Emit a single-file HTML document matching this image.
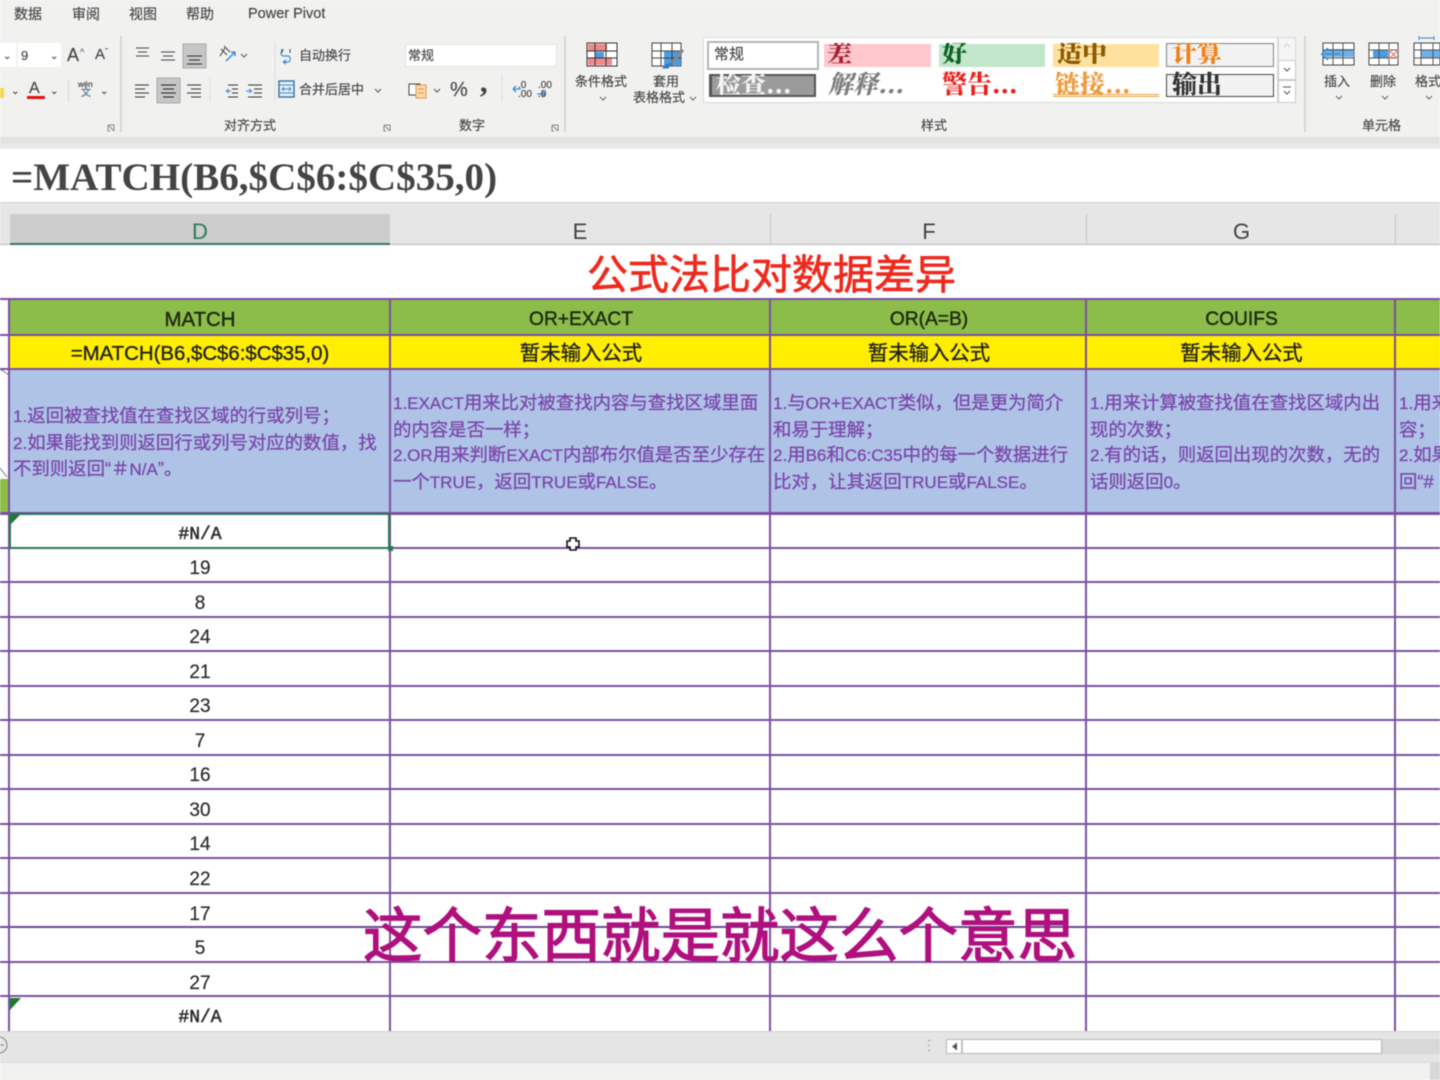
<!DOCTYPE html>
<html lang="zh">
<head>
<meta charset="utf-8">
<title>公式法比对数据差异</title>
<style>
html,body{margin:0;padding:0;}
body{width:1440px;height:1080px;position:relative;overflow:hidden;background:#fff;font-family:"Liberation Sans","Noto Sans CJK SC",sans-serif;color:#333;filter:blur(.5px);}
.a{position:absolute;white-space:nowrap;}
.t{position:absolute;white-space:nowrap;font-size:13px;line-height:16px;color:#4a4a4a;-webkit-text-stroke:.2px #4a4a4a;}
.c{position:absolute;text-align:center;white-space:nowrap;}
.h{position:absolute;background:#7a4fa3;}
.num{font-size:19px;line-height:24px;color:#2c2c2c;-webkit-text-stroke:.2px #2c2c2c;}
.mono{font-family:'Liberation Mono','Noto Sans CJK SC',monospace;font-size:18px;-webkit-text-stroke:.5px #2c2c2c;}
.head{font-size:19.2px;line-height:24px;color:#1f2a10;-webkit-text-stroke:.45px #1f2a10;}
.f{font-size:20.4px;line-height:24px;color:#222;-webkit-text-stroke:.35px #222;}
.desc{position:absolute;font-size:18.4px;line-height:25.7px;color:#7a48ac;white-space:nowrap;-webkit-text-stroke:.3px #7a48ac;}
.desc span{font-size:17px;}
.st{position:absolute;font-family:"Noto Serif CJK SC","Liberation Serif",serif;font-weight:900;font-size:25px;line-height:24px;white-space:nowrap;}
.r1{clip-path:inset(3px 0 0 0);}
svg{position:absolute;overflow:visible;}
</style>
</head>
<body>
<!-- ribbon -->
<div class="a" style="left:0;top:0;width:1440px;height:137px;background:#f1f1f0;"></div>
<div class="a" style="left:0;top:137px;width:1440px;height:12px;background:linear-gradient(#dfdfdd,#ececeb);"></div>
<div class="t" style="left:14px;top:6px;font-size:14px;">数据</div>
<div class="t" style="left:72px;top:6px;font-size:14px;">审阅</div>
<div class="t" style="left:129px;top:6px;font-size:14px;">视图</div>
<div class="t" style="left:186px;top:6px;font-size:14px;">帮助</div>
<div class="t" style="left:248px;top:6px;font-size:14.5px;">Power Pivot</div>

<!-- font group -->
<div class="a" style="left:0;top:43px;width:16px;height:24px;background:#fff;"></div>
<div class="a" style="left:18px;top:43px;width:43px;height:24px;background:#fff;"></div>
<div class="t" style="left:21px;top:48px;">9</div>
<div class="t" style="left:3px;top:49px;font-size:10px;">⌄</div>
<div class="t" style="left:50px;top:49px;font-size:10px;">⌄</div>
<div class="t" style="left:67px;top:44px;font-size:18px;line-height:22px;">A</div>
<div class="t" style="left:80px;top:44px;font-size:9px;color:#4a90d0;">^</div>
<div class="t" style="left:95px;top:47px;font-size:15px;">A</div>
<div class="t" style="left:105px;top:44px;font-size:9px;color:#4a90d0;">ˇ</div>
<div class="a" style="left:0;top:88px;width:4px;height:10px;background:#f4d84a;"></div>
<div class="t" style="left:11px;top:84px;font-size:10px;">⌄</div>
<div class="t" style="left:29px;top:80px;font-size:16px;line-height:18px;">A</div>
<div class="a" style="left:27px;top:96px;width:18px;height:3px;background:#e01010;"></div>
<div class="t" style="left:50px;top:84px;font-size:10px;">⌄</div>
<div class="a" style="left:68px;top:80px;width:1px;height:22px;background:#d8d8d8;"></div>
<div class="t" style="left:78px;top:80px;font-size:8px;line-height:9px;">wén</div>
<div class="t" style="left:81px;top:88px;font-size:10px;line-height:11px;color:#4a90d0;">文</div>
<div class="t" style="left:100px;top:84px;font-size:10px;">⌄</div>
<div class="a" style="left:120px;top:36px;width:2px;height:96px;background:#d6d6d6;"></div>
<svg style="left:0;top:0" width="1440" height="140" fill="none" stroke-width="1">
  <path d="M108 125h6v6M114 131l-5-5M108 125v6h2" stroke="#888"/>
  <path d="M384 125h6v6M390 131l-5-5M384 125v6h2" stroke="#888"/>
  <path d="M552 125h6v6M558 131l-5-5M552 125v6h2" stroke="#888"/>
  <!-- alignment icons -->
  <path d="M136 48h13M138 52h9M136 56h13" stroke="#444"/>
  <path d="M161 52h14M163 56h10M161 60h14" stroke="#444"/>
  <rect x="183" y="44" width="23" height="24" fill="#c6c6c6" stroke="#aaa"/>
  <path d="M187 56h15M189 60h11M187 64h15" stroke="#333"/>
  <path d="M135 85h14M135 89h10M135 93h14M135 97h10" stroke="#333"/>
  <rect x="157" y="78" width="23" height="25" fill="#c6c6c6" stroke="#aaa"/>
  <path d="M161 85h15M163 89h11M161 93h15M163 97h11" stroke="#222"/>
  <path d="M187 85h14M191 89h10M187 93h14M191 97h10" stroke="#333"/>
  <path d="M210 78v24M275 42v62" stroke="#ddd"/>
  <path d="M228 85h10M232 89h6M232 93h6M228 97h10" stroke="#333"/>
  <path d="M226 91h5M226 91l3-2M226 91l3 2" stroke="#3d8bd0"/>
  <path d="M248 85h14M254 89h8M254 93h8M248 97h14" stroke="#333"/>
  <path d="M246 91h6M252 91l-3-2M252 91l-3 2" stroke="#3d8bd0"/>
  <!-- orientation -->
  <path d="M221 49l6 6M224 46l6 6M220 56l5-8" stroke="#444"/>
  <path d="M226 61l9-9M235 52h-4M235 52v4" stroke="#3d8bd0" stroke-width="1.5"/>
  <path d="M241 54l3 3 3-3" stroke="#555"/>
  <!-- wrap -->
  <path d="M284 50c-4 0-4 6 0 6h4c3 0 3 6 0 6h-5M283 62l3-2M283 62l3 2" stroke="#3d8bd0" stroke-width="1.2"/>
  <path d="M290 49v4M282 49v4" stroke="#444"/>
  <!-- merge -->
  <rect x="279" y="81" width="15" height="16" fill="#e6f0fa" stroke="#3a6f9a" stroke-width="1.4"/>
  <path d="M279 85h15M279 93h15M282 89h9M282 89l2-2M282 89l2 2M291 89l-2-2M291 89l-2 2" stroke="#3d8bd0"/>
  <path d="M375 89l3 3 3-3" stroke="#555"/>
  <!-- number -->
  <path d="M549 53l3 3 3-3" stroke="#444"/>
  <rect x="409" y="84" width="11" height="11" fill="#fff" stroke="#444"/>
  <rect x="416" y="85" width="10" height="13" fill="#fbd9a8" stroke="#e2974a"/>
  <path d="M418 89h6M418 93h6" stroke="#e2974a"/>
  <path d="M434 89l3 3 3-3" stroke="#555"/>
  <path d="M502 74v28" stroke="#dedede"/>
  <path d="M513 89h8M513 89l3-3M513 89l3 3" stroke="#3d8bd0" stroke-width="1.3"/>
  <path d="M537 94h8M545 94l-3-3M545 94l-3 3" stroke="#3d8bd0" stroke-width="1.3"/>
  <path d="M565 36v96" stroke="#d6d6d6" stroke-width="2"/>
  <!-- conditional formatting -->
  <rect x="587" y="43" width="30" height="23" fill="#fff" stroke="#333"/>
  <path d="M588 44h19v7h-19zM588 58h24v7h-24z" fill="#f08a8a" stroke="none"/>
  <rect x="595" y="52" width="9" height="6" fill="#4a9be0" stroke="none"/>
  <path d="M595 43v23M606 43v23M587 51h30M587 58h30" stroke="#333"/>
  <!-- table format -->
  <rect x="652" y="43" width="29" height="23" fill="#fff" stroke="#444"/>
  <path d="M664 51h17v15h-17z" fill="#4a9be0" stroke="none"/>
  <path d="M661 43v23M672 43v23M652 51h29M652 58h29" stroke="#444"/>
  <path d="M683 50l-12 14" stroke="#8a8a8a" stroke-width="3"/>
  <path d="M672 63l-4 5h-5l3-3z" fill="#2f7cc0" stroke="#2f7cc0"/>
  <!-- cells icons -->
  <rect x="1323" y="43" width="31" height="22" fill="#fff" stroke="#444"/>
  <rect x="1325" y="49" width="29" height="8" fill="#6db0ea" stroke="none"/>
  <path d="M1333 43v22M1343 43v22M1323 50h31M1323 58h31" stroke="#555"/>
  <path d="M1340 54h-18l6-6M1322 54l6 6" stroke="#3d8bd0" stroke-width="1.5"/>
  <rect x="1369" y="43" width="29" height="22" fill="#fff" stroke="#444"/>
  <rect x="1373" y="50" width="15" height="8" fill="#4a9be0" stroke="none"/>
  <path d="M1379 43v22M1389 43v22M1369 50h29M1369 58h29" stroke="#555"/>
  <path d="M1388 49l11 11M1399 49l-11 11" stroke="#e88a8a" stroke-width="1.5"/>
  <rect x="1414" y="43" width="26" height="22" fill="#fff" stroke="#444"/>
  <rect x="1421" y="50" width="19" height="8" fill="#6db0ea" stroke="none"/>
  <path d="M1421 43v22M1433 43v22M1414 50h26M1414 58h26" stroke="#555"/>
  <path d="M1419 38h15M1419 36v4M1434 36v4" stroke="#3d8bd0"/>
  <path d="M1305 36v96" stroke="#d6d6d6" stroke-width="2"/>
  <path d="M1336 96l3 3 3-3M1382 96l3 3 3-3M1426 96l3 3 3-3M600 97l3 3 3-3M690 97l3 3 3-3" stroke="#666"/>
</svg>
<div class="t" style="left:299px;top:48px;font-size:13px;">自动换行</div>
<div class="t" style="left:299px;top:82px;font-size:13px;">合并后居中</div>
<div class="t" style="left:224px;top:118px;font-size:13px;">对齐方式</div>

<div class="a" style="left:405px;top:44px;width:152px;height:23px;background:#fff;border:1px solid #e2e2e2;box-sizing:border-box;"></div>
<div class="t" style="left:408px;top:48px;">常规</div>
<div class="t" style="left:450px;top:79px;font-size:20px;line-height:22px;">%</div>
<div class="t" style="left:480px;top:70px;font-size:30px;line-height:26px;font-weight:bold;font-family:'Liberation Serif',serif;color:#444;">,</div>
<div class="t" style="left:518px;top:81px;font-size:10px;line-height:9px;">.0<br>.00</div>
<div class="t" style="left:538px;top:81px;font-size:10px;line-height:9px;">.00<br>.0</div>
<div class="t" style="left:459px;top:118px;">数字</div>

<div class="t" style="left:575px;top:74px;">条件格式</div>
<div class="t" style="left:653px;top:74px;">套用</div>
<div class="t" style="left:633px;top:90px;">表格格式</div>

<!-- style gallery -->
<div class="a" style="left:703px;top:37px;width:575px;height:66px;background:#fff;border:1px solid #d8d8d8;box-sizing:border-box;"></div>
<div class="a" style="left:707px;top:41px;width:112px;height:29px;background:#fff;border:2px solid #b5b5b5;box-sizing:border-box;"></div>
<div class="t" style="left:714px;top:47px;font-size:15px;">常规</div>
<div class="a" style="left:709px;top:74px;width:107px;height:23px;background:#9b9b9b;border:1px solid #555;border-width:2px 2px 2px 3px;box-sizing:border-box;"></div>
<div class="st" style="left:716px;top:71px;color:#f4f4f4;clip-path:inset(3px 0 0 0);">检查...</div>
<div class="a" style="left:824px;top:44px;width:107px;height:23px;background:#ffc7ce;"></div>
<div class="st r1" style="left:827px;top:40px;color:#a5202c;">差</div>
<div class="a" style="left:939px;top:44px;width:106px;height:23px;background:#c2e6c9;"></div>
<div class="st r1" style="left:942px;top:40px;color:#0d6320;">好</div>
<div class="a" style="left:1053px;top:44px;width:106px;height:23px;background:#ffe19e;"></div>
<div class="st r1" style="left:1057px;top:40px;color:#8d5a00;">适中</div>
<div class="a" style="left:1166px;top:43px;width:108px;height:24px;background:#f2f2f2;border:1px solid #7f7f7f;box-sizing:border-box;"></div>
<div class="st r1" style="left:1172px;top:40px;color:#f07f17;">计算</div>
<div class="st" style="left:828px;top:71px;color:#7f7f7f;font-style:italic;">解释...</div>
<div class="st" style="left:942px;top:71px;color:#e6201b;">警告...</div>
<div class="st" style="left:1055px;top:71px;color:#ef9a3c;">链接...</div>
<div class="a" style="left:1053px;top:94px;width:106px;height:3px;border-top:1px solid #ef9a3c;border-bottom:1px solid #ef9a3c;box-sizing:border-box;"></div>
<div class="a" style="left:1166px;top:74px;width:108px;height:23px;background:#f2f2f2;border:1px solid #4a4a4a;box-sizing:border-box;"></div>
<div class="st" style="left:1172px;top:71px;color:#333;">输出</div>
<div class="a" style="left:1278px;top:37px;width:18px;height:66px;background:#f5f5f5;border:1px solid #d8d8d8;box-sizing:border-box;"></div>
<div class="a" style="left:1278px;top:60px;width:18px;height:20px;background:#fff;border:1px solid #c8c8c8;box-sizing:border-box;"></div>
<div class="a" style="left:1278px;top:80px;width:18px;height:23px;background:#fff;border:1px solid #c8c8c8;box-sizing:border-box;"></div>
<svg style="left:1278px;top:37px" width="18" height="66" fill="none" stroke="#555"><path d="M6 10l3-3 3 3" stroke="#ccc"/><path d="M6 31l3 3 3-3"/><path d="M5 50h8M6 54l3 3 3-3"/></svg>
<div class="t" style="left:921px;top:118px;">样式</div>
<div class="t" style="left:1324px;top:74px;">插入</div>
<div class="t" style="left:1370px;top:74px;">删除</div>
<div class="t" style="left:1415px;top:74px;">格式</div>
<div class="t" style="left:1362px;top:118px;">单元格</div>

<!-- formula bar -->
<div class="a" style="left:0;top:149px;width:1440px;height:53px;background:#fff;border-bottom:1px solid #d2d2d2;"></div>
<div class="a" style="left:11px;top:155px;font-family:'Liberation Serif',serif;font-weight:bold;font-size:39.1px;line-height:46px;color:#444;">=MATCH(B6,$C$6:$C$35,0)</div>

<!-- column headers -->
<div class="a" style="left:0;top:203px;width:1440px;height:41px;background:#e6e6e6;"></div>
<div class="a" style="left:0;top:244px;width:1440px;height:1px;background:#b9b9b9;"></div>
<div class="a" style="left:10px;top:214px;width:380px;height:31px;background:#cdcdcd;"></div>
<div class="a" style="left:10px;top:243px;width:380px;height:2px;background:#2f7a58;"></div>
<div class="a" style="left:770px;top:214px;width:1px;height:30px;background:#c4c4c4;"></div>
<div class="a" style="left:1086px;top:214px;width:1px;height:30px;background:#c4c4c4;"></div>
<div class="a" style="left:1395px;top:214px;width:1px;height:30px;background:#c4c4c4;"></div>
<div class="c" style="left:10px;top:219px;width:380px;font-size:22px;line-height:26px;color:#2f7a58;">D</div>
<div class="c" style="left:390px;top:219px;width:380px;font-size:22px;line-height:26px;color:#444;">E</div>
<div class="c" style="left:771px;top:219px;width:316px;font-size:22px;line-height:26px;color:#444;">F</div>
<div class="c" style="left:1087px;top:219px;width:309px;font-size:22px;line-height:26px;color:#444;">G</div>

<!-- title -->
<div class="a" style="left:587px;top:250px;font-size:41px;line-height:50px;color:#ee2a1e;-webkit-text-stroke:.7px #ee2a1e;">公式法比对数据差异</div>

<!-- fills -->
<div class="a" style="left:9px;top:299px;width:1431px;height:36px;background:#8cbd4b;"></div>
<div class="a" style="left:9px;top:335px;width:1431px;height:34px;background:#ffee00;"></div>
<div class="a" style="left:9px;top:369px;width:1431px;height:144px;background:#afc3e6;"></div>
<div class="a" style="left:0;top:479px;width:9px;height:34px;background:#8cbd4b;"></div>
<svg style="left:0;top:360px" width="10" height="120" fill="none" stroke="#777"><path d="M0 9l9 6M0 108l7 9"/></svg>

<!-- grid -->
<div class="h" style="left:0;top:298px;width:1440px;height:2px;"></div>
<div class="h" style="left:0;top:334px;width:1440px;height:2px;"></div>
<div class="h" style="left:0;top:368px;width:1440px;height:2px;"></div>
<div class="h" style="left:0;top:512px;width:1440px;height:3px;"></div>
<div class="h" style="left:0;top:547px;width:1440px;height:2px;"></div>
<div class="h" style="left:0;top:581px;width:1440px;height:2px;"></div>
<div class="h" style="left:0;top:616px;width:1440px;height:2px;"></div>
<div class="h" style="left:0;top:650px;width:1440px;height:2px;"></div>
<div class="h" style="left:0;top:685px;width:1440px;height:2px;"></div>
<div class="h" style="left:0;top:719px;width:1440px;height:2px;"></div>
<div class="h" style="left:0;top:754px;width:1440px;height:2px;"></div>
<div class="h" style="left:0;top:788px;width:1440px;height:2px;"></div>
<div class="h" style="left:0;top:823px;width:1440px;height:2px;"></div>
<div class="h" style="left:0;top:857px;width:1440px;height:2px;"></div>
<div class="h" style="left:0;top:892px;width:1440px;height:2px;"></div>
<div class="h" style="left:0;top:926px;width:1440px;height:2px;background:#6a4a92;"></div>
<div class="h" style="left:0;top:961px;width:1440px;height:2px;"></div>
<div class="h" style="left:0;top:995px;width:1440px;height:2px;"></div>
<div class="h" style="left:8px;top:298px;width:2px;height:733px;"></div>
<div class="h" style="left:389px;top:298px;width:2px;height:733px;"></div>
<div class="h" style="left:769px;top:298px;width:2px;height:733px;"></div>
<div class="h" style="left:1085px;top:298px;width:2px;height:733px;"></div>
<div class="h" style="left:1394px;top:298px;width:2px;height:733px;"></div>

<!-- headers -->
<div class="c head" style="left:10px;top:308px;width:380px;font-size:20.4px;">MATCH</div>
<div class="c head" style="left:391px;top:308px;width:380px;">OR+EXACT</div>
<div class="c head" style="left:771px;top:308px;width:316px;">OR(A=B)</div>
<div class="c head" style="left:1087px;top:308px;width:309px;">COUIFS</div>
<div class="c f" style="left:10px;top:342px;width:380px;">=MATCH(B6,$C$6:$C$35,0)</div>
<div class="c f" style="left:391px;top:342px;width:380px;">暂未输入公式</div>
<div class="c f" style="left:771px;top:342px;width:316px;">暂未输入公式</div>
<div class="c f" style="left:1087px;top:342px;width:309px;">暂未输入公式</div>

<!-- descriptions -->
<div class="desc" style="left:13px;top:403px;line-height:25.5px;"><span>1.</span>返回被查找值在查找区域的行或列号；<br><span>2.</span>如果能找到则返回行或列号对应的数值，找<br>不到则返回“＃<span>N/A</span>”。</div>
<div class="desc" style="left:393px;top:390px;"><span>1.EXACT</span>用来比对被查找内容与查找区域里面<br>的内容是否一样；<br><span>2.OR</span>用来判断<span>EXACT</span>内部布尔值是否至少存在<br>一个<span>TRUE</span>，返回<span>TRUE</span>或<span>FALSE</span>。</div>
<div class="desc" style="left:773px;top:390px;"><span>1.</span>与<span>OR+EXACT</span>类似，但是更为简介<br>和易于理解；<br><span>2.</span>用<span>B6</span>和<span>C6:C35</span>中的每一个数据进行<br>比对，让其返回<span>TRUE</span>或<span>FALSE</span>。</div>
<div class="desc" style="left:1090px;top:390px;"><span>1.</span>用来计算被查找值在查找区域内出<br>现的次数；<br><span>2.</span>有的话，则返回出现的次数，无的<br>话则返回<span>0</span>。</div>
<div class="desc" style="left:1399px;top:390px;"><span>1.</span>用来<br>容；<br><span>2.</span>如果<br>回“#</div>

<!-- selection -->
<div class="a" style="left:9px;top:513px;width:381px;height:36px;border:2px solid #2a7a52;box-sizing:border-box;"></div>
<div class="a" style="left:388px;top:546px;width:5px;height:5px;background:#2a7a52;"></div>
<svg style="left:0;top:0" width="1440" height="1080">
  <path d="M11 515h9l-9 9z" fill="#1d7a30"/>
  <path d="M10 998h11l-11 12z" fill="#1d7a30"/>
  <path d="M570 538h6v3h3v6h-3v3h-6v-3h-3v-6h3z" fill="#fff" stroke="#111" stroke-width="1.6"/>
</svg>

<!-- values -->
<div class="c num mono" style="left:10px;top:523px;width:380px;">#N/A</div>
<div class="c num" style="left:10px;top:557px;width:380px;">19</div>
<div class="c num" style="left:10px;top:592px;width:380px;">8</div>
<div class="c num" style="left:10px;top:626px;width:380px;">24</div>
<div class="c num" style="left:10px;top:661px;width:380px;">21</div>
<div class="c num" style="left:10px;top:695px;width:380px;">23</div>
<div class="c num" style="left:10px;top:730px;width:380px;">7</div>
<div class="c num" style="left:10px;top:764px;width:380px;">16</div>
<div class="c num" style="left:10px;top:799px;width:380px;">30</div>
<div class="c num" style="left:10px;top:833px;width:380px;">14</div>
<div class="c num" style="left:10px;top:868px;width:380px;">22</div>
<div class="c num" style="left:10px;top:903px;width:380px;">17</div>
<div class="c num" style="left:10px;top:937px;width:380px;">5</div>
<div class="c num" style="left:10px;top:972px;width:380px;">27</div>
<div class="c num mono" style="left:10px;top:1006px;width:380px;">#N/A</div>

<!-- subtitle -->
<div class="a" style="left:363px;top:902px;font-size:59.5px;line-height:70px;color:#b0107e;-webkit-text-stroke:1.3px #b0107e;">这个东西就是就这么个意思</div>

<!-- bottom bars -->
<div class="a" style="left:0;top:1031px;width:1440px;height:31px;background:#e5e5e5;border-top:1px solid #d0d0d0;box-sizing:border-box;"></div>
<div class="a" style="left:0;top:1062px;width:1440px;height:18px;background:#f1f1f0;border-top:1px solid #dcdcdc;box-sizing:border-box;"></div>
<div class="a" style="left:1430px;top:1062px;width:10px;height:18px;background:#d8d8d8;"></div>
<svg style="left:0;top:1031px" width="1440" height="31" fill="none">
  <circle cx="-1" cy="14" r="8" stroke="#888"/>
  <path d="M0 14h4" stroke="#888"/>
  <path d="M929 9v1M929 14v1M929 19v1" stroke="#999" stroke-width="2"/>
</svg>
<div class="a" style="left:946px;top:1039px;width:436px;height:15px;background:#fff;border:1px solid #b8b8b8;box-sizing:border-box;"></div>
<div class="a" style="left:961px;top:1039px;width:2px;height:15px;background:#c4c4c4;"></div>
<div class="a" style="left:1382px;top:1039px;width:58px;height:15px;background:#d8d8d8;"></div>
<svg style="left:946px;top:1039px" width="16" height="15"><path d="M6 7.5l5-4v8z" fill="#555"/></svg>
</body>
</html>
